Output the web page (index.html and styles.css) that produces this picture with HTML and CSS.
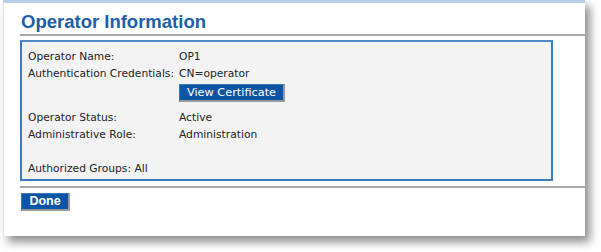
FILE: index.html
```html
<!DOCTYPE html>
<html>
<head>
<meta charset="utf-8">
<link rel="stylesheet" href="styles.css">
</head>
<body>
<div class="window">
  <h1 class="title">Operator Information</h1>
  <div class="rule"></div>
  <div class="panel">
    <div class="grid">
      <div class="label">Operator Name:</div><div class="value">OP1</div>
      <div class="label">Authentication Credentials:</div><div class="value">CN=operator</div>
      <div class="label"></div><div class="value btn-row"><button class="btn">View Certificate</button></div>
      <div class="label">Operator Status:</div><div class="value">Active</div>
      <div class="label">Administrative Role:</div><div class="value">Administration</div>
    </div>
    <div class="groups">Authorized Groups: All</div>
  </div>
  <div class="rule rule-bottom"></div>
  <button class="btn btn-done">Done</button>
</div>
</body>
</html>
```
FILE: styles.css
```css
html, body {
  margin: 0;
  padding: 0;
  background: #ffffff;
}
body {
  width: 601px;
  height: 252px;
  overflow: hidden;
}
.window {
  margin-left: 3px;
  width: 582px;
  height: 236px;
  box-sizing: border-box;
  background: #ffffff;
  border-top: 3px solid #b8cfea;
  border-left: 1px solid #e4e4e4;
  padding-left: 16px;
  box-shadow: 5px 6px 9px rgba(0, 0, 0, 0.45);
}
.title {
  margin: 9px 0 0 1px;
  font-family: "Liberation Sans", Arial, sans-serif;
  font-weight: bold;
  font-size: 18.5px;
  line-height: 20px;
  color: #1c5ea8;
}
.rule {
  margin-top: 2px;
  height: 2px;
  background: #a8a8a8;
}
.panel {
  margin-top: 4px;
  width: 533px;
  height: 141px;
  box-sizing: border-box;
  border: 2px solid #3a7cc2;
  border-top-color: #4f8ac8;
  background: #f3f3f3;
  padding: 6px 0 0 6px;
  font-family: "DejaVu Sans", Verdana, sans-serif;
  font-size: 10.7px;
  color: #222222;
}
.grid {
  display: grid;
  grid-template-columns: 151px 1fr;
  line-height: 17px;
}
.btn-row {
  padding: 2px 0 7px 0;
  line-height: 0;
}
.btn {
  font-family: "DejaVu Sans", Verdana, sans-serif;
  font-size: 11.3px;
  color: #ffffff;
  background: #0a55a5;
  border: 0;
  border-right: 2px solid #9a9a9a;
  border-bottom: 2px solid #9a9a9a;
  border-top: 1px solid #3c78b8;
  border-left: 1px solid #3c78b8;
  padding: 0;
  margin: 0;
  height: 18px;
  width: 106px;
  line-height: 15px;
  text-align: center;
}
.groups {
  margin-top: 17px;
  line-height: 17px;
}
.rule-bottom {
  margin-top: 5px;
}
.btn-done {
  margin-top: 5px;
  margin-left: 1px;
  width: 49px;
  height: 18px;
  font-family: "Liberation Sans", Arial, sans-serif;
  font-weight: bold;
  font-size: 12.5px;
}
```
